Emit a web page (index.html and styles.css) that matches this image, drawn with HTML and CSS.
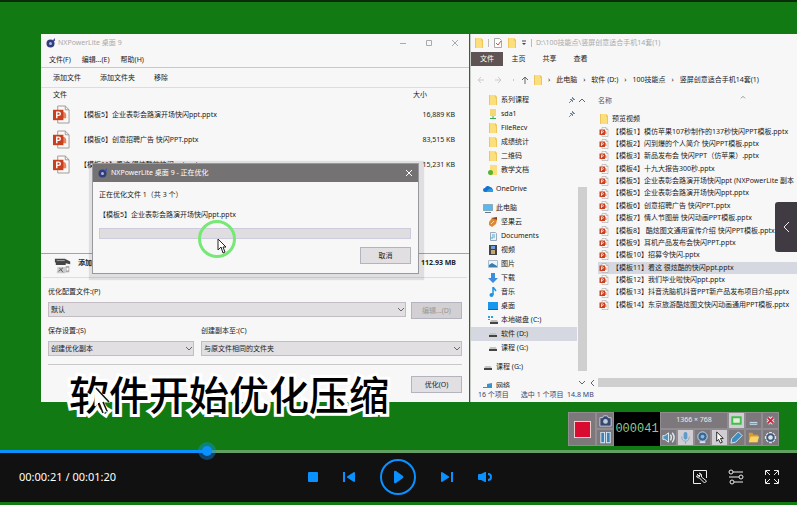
FILE: index.html
```html
<!DOCTYPE html>
<html>
<head>
<meta charset="utf-8">
<title>视频播放</title>
<link rel="stylesheet" href="styles.css">
</head>
<body>
<svg class="sprite" aria-hidden="true">
  <symbol id="ppt" viewBox="0 0 18 20">
    <path d="M5 1h8l4 4v14H5z" fill="#fbf7f5" stroke="#999" stroke-width="1"/>
    <path d="M13 1v4h4" fill="none" stroke="#999"/>
    <path d="M10 7a4 4 0 0 1 4 4v3h-4z" fill="#e9835f"/>
    <rect x="0" y="5" width="11" height="11" fill="#c8401f"/>
    <path d="M4 14V7.500h2a1.700 1.700 0 0 1 0 3.400h-2" fill="none" stroke="#fff" stroke-width="1.500"/>
  </symbol>
  <symbol id="folder" viewBox="0 0 10 10">
    <path d="M1 0h6l2 2v8H1z" fill="#fbdf7c"/><path d="M1 0h1v10H1zM7 0l2 2v8H8V3H7z" fill="#eec75c"/>
  </symbol>
  <symbol id="chev" viewBox="0 0 8 6"><path d="M1 1l3 3 3-3" fill="none" stroke="#666"/></symbol>
  <symbol id="pin" viewBox="0 0 6 6"><path d="M0 6l2-2M1 2l3 3M2 3l2-2M3 0l3 3M3 4l2-2" stroke="#75879a" fill="none"/></symbol>
  <symbol id="disk" viewBox="0 0 10 10"><path d="M2 4h6l1 3H1z" fill="#c4c4c4"/><path d="M1 6h8v2H1z" fill="#444"/></symbol>
  <symbol id="cursor" viewBox="0 0 10 16"><path d="M1 1v11l3-3 2 6 2-1-2-5h3z" fill="#fff" stroke="#222"/></symbol>
  <symbol id="app" viewBox="0 0 10 10"><circle cx="4.500" cy="5.500" r="4" fill="#333d78"/><circle cx="4.500" cy="5.500" r="1.500" fill="#aab5e8"/><path d="M6 3l3-3v3z" fill="#4656a8"/></symbol>
  <symbol id="close" viewBox="0 0 8 8"><path d="M1 1l6 6M7 1L1 7" stroke="currentColor" fill="none"/></symbol>
</svg>

<main class="desktop">
  <section class="window optimizer" aria-label="NXPowerLite">
    <header class="title">
      <svg class="i10"><use href="#app"/></svg><span>NXPowerLite 桌面 9</span>
      <span class="winbuttons">
        <button aria-label="最小化"><svg class="i8" viewBox="0 0 8 8"><path d="M1 4.500h6" stroke="currentColor"/></svg></button>
        <button aria-label="最大化"><svg class="i8" viewBox="0 0 8 8"><path d="M1.500 1.500h5v5h-5z" fill="none" stroke="currentColor"/></svg></button>
        <button aria-label="关闭"><svg class="i8"><use href="#close"/></svg></button>
      </span>
    </header>
    <nav class="menu"><button>文件(F)</button><button>编辑...(E)</button><button>帮助(H)</button></nav>
    <nav class="tools"><button>添加文件</button><button>添加文件夹</button><button>移除</button></nav>
    <div class="filelist">
      <table>
        <thead><tr><th colspan="2">文件</th><th class="size">大小</th></tr></thead>
        <tbody>
          <tr><td class="pic"><svg class="ppt-big"><use href="#ppt"/></svg></td><td>【模板5】企业表彰会路演开场快闪ppt.pptx</td><td class="size">16,889 KB</td></tr>
          <tr><td class="pic"><svg class="ppt-big"><use href="#ppt"/></svg></td><td>【模板6】创意招聘广告 快闪PPT.pptx</td><td class="size">83,515 KB</td></tr>
          <tr><td class="pic"><svg class="ppt-big"><use href="#ppt"/></svg></td><td>【模板11】看这 很炫酷的快闪ppt.pptx</td><td class="size">15,231 KB</td></tr>
        </tbody>
      </table>
    </div>
    <div class="total">
      <svg class="camera" viewBox="0 0 18 20"><path d="M0 2h11l6 3v3l-5-1v2H1V6H0z" fill="#454545"/><path d="M2 4h9" stroke="#aaa"/><path d="M3 11h9v7H2z" fill="#ccc"/><path d="M4 16l5-4M5 12l4 5" stroke="#555"/><path d="M12 10h4v7h-4z" fill="#aaa"/><path d="M13 12h2v3h-2z" fill="#fff"/></svg>
      <b>添加</b><b class="sum">112.93 MB</b>
    </div>
    <form class="settings">
      <label for="profile">优化配置文件:(P)</label>
      <div class="line">
        <div class="pick grow"><select id="profile"><option>默认</option></select><svg><use href="#chev"/></svg></div>
        <button type="button" class="btn" disabled>编辑...(D)</button>
      </div>
      <div class="line pair">
        <div class="save"><label for="save">保存设置:(S)</label><div class="pick"><select id="save"><option>创建优化副本</option></select><svg><use href="#chev"/></svg></div></div>
        <div class="grow"><label for="dest">创建副本至:(C)</label><div class="pick"><select id="dest"><option>与原文件相同的文件夹</option></select><svg><use href="#chev"/></svg></div></div>
      </div>
      <div class="actions"><button type="button" class="btn">优化(O)</button></div>
    </form>
  </section>

  <section class="window explorer" aria-label="文件资源管理器">
    <header class="title">
      <svg class="i10"><use href="#folder"/></svg><i class="sep"></i>
      <svg class="i10" viewBox="0 0 10 10"><path d="M1.500.5h5l2 2v7h-7z" fill="#fff" stroke="#aaa"/><path d="M3 5l2 2 3-4" fill="none" stroke="#c8523c"/></svg>
      <svg class="i10"><use href="#folder"/></svg>
      <svg class="i6" viewBox="0 0 6 6"><path d="M1 1h4" stroke="#444"/><path d="M1 3h4L3 5z" fill="#444"/></svg><i class="sep"></i>
      <span>D:\100技能点\竖屏创意适合手机14套(1)</span>
    </header>
    <nav class="tabs"><button class="active">文件</button><button>主页</button><button>共享</button><button>查看</button></nav>
    <nav class="address">
      <svg class="arrows" viewBox="0 0 54 10"><path d="M7 5H1m3-3L1 5l3 3M18 5h6m-3-3l3 3-3 3" fill="none" stroke="#ccc"/><path d="M36 5h1" stroke="#999"/><path d="M48 9V2m-3 3l3-3 3 3" fill="none" stroke="#666"/></svg>
      <svg class="i10 home"><use href="#folder"/></svg>
      <ol><li>此电脑</li><li>软件 (D:)</li><li>100技能点</li><li>竖屏创意适合手机14套(1)</li></ol>
    </nav>
    <div class="panes">
      <div class="side">
        <ul>
          <li class="in"><svg class="i10"><use href="#folder"/></svg>系列课程<svg class="pin"><use href="#pin"/></svg></li>
          <li class="in"><svg class="i10" viewBox="0 0 10 10"><path d="M2 0h6v7H2z" fill="#f5d873"/><path d="M5 7v2M2 9.500h6" stroke="#36ac55"/></svg>sda1<svg class="pin"><use href="#pin"/></svg></li>
          <li class="in"><svg class="i10"><use href="#folder"/></svg>FileRecv</li>
          <li class="in"><svg class="i10"><use href="#folder"/></svg>成绩统计</li>
          <li class="in"><svg class="i10"><use href="#folder"/></svg>二维码</li>
          <li class="in"><svg class="i10" viewBox="0 0 10 10"><path d="M2 0h7v10H2z" fill="#fbdf7c"/><circle cx="2.500" cy="7.500" r="2.500" fill="#55b52c"/></svg>教学文档</li>
        </ul>
        <ul>
          <li><svg class="i10" viewBox="0 0 10 10"><path d="M2 8a2 2 0 0 1 0-4 3 3 0 0 1 5-1 3 3 0 0 1 2 5z" fill="#1473cc"/><path d="M3 8l3-3a3 3 0 0 1 4 1v2z" fill="#2a9de8"/></svg>OneDrive</li>
        </ul>
        <ul>
          <li><svg class="i10" viewBox="0 0 10 10"><path d="M.5 1.500h9v6h-9z" fill="#5ab8f0" stroke="#8ab"/><path d="M2 9.500h6" stroke="#678"/></svg>此电脑</li>
          <li class="in"><svg class="i10" viewBox="0 0 10 10"><path d="M1 5l3-4 5 2-1 4-4 3-3-2z" fill="#dc8a35"/><path d="M3 1l6-1v3z" fill="#8c3c1e"/><path d="M3 7l3-3" stroke="#ffe09a"/></svg>坚果云</li>
          <li class="in"><svg class="i10" viewBox="0 0 10 10"><path d="M2.500 1.500h5l1 1v7h-6z" fill="#e7f2fa" stroke="#9ab"/><path d="M4 4h3M4 6h3M2 7h3" stroke="#58a9cc"/></svg>Documents</li>
          <li class="in"><svg class="i10" viewBox="0 0 10 10"><path d="M1 0h8v10H1z" fill="#444"/><path d="M3 1h4v3H3z" fill="#6a9edc"/><path d="M3 5h4v4H3z" fill="#c9a86c"/></svg>视频</li>
          <li class="in"><svg class="i10" viewBox="0 0 10 10"><path d="M.5 1.500h9v7h-9z" fill="#e9f4fb" stroke="#abc"/><path d="M1 6l3-2 5 3v1H1z" fill="#387dad"/></svg>图片</li>
          <li class="in"><svg class="i10" viewBox="0 0 10 10"><path d="M3 0h4v5h3l-5 5-5-5h3z" fill="#3e8ddd"/></svg>下载</li>
          <li class="in"><svg class="i10" viewBox="0 0 10 10"><path d="M5 8V0l3 4" fill="none" stroke="#1c94e0" stroke-width="1.500"/><circle cx="3.500" cy="8" r="2" fill="#1c94e0"/></svg>音乐</li>
          <li class="in"><svg class="i10" viewBox="0 0 10 10"><path d="M0 1h10v8H0z" fill="#1696ec"/><path d="M0 8h10v1H0z" fill="#0d67b0"/></svg>桌面</li>
          <li class="in"><svg class="i10" viewBox="0 0 10 10"><path d="M0 1h2v2H0zM3 1h2v2H3zM0 4h2v1H0z" fill="#23a6e0"/><path d="M3 5h6l1 2H2z" fill="#bbb"/><path d="M2 7h8v2H2z" fill="#444"/></svg>本地磁盘 (C:)</li>
          <li class="in current"><svg class="i10"><use href="#disk"/></svg>软件 (D:)</li>
          <li class="in"><svg class="i10"><use href="#disk"/></svg>课程 (G:)</li>
        </ul>
        <ul><li><svg class="i10"><use href="#disk"/></svg>课程 (G:)</li></ul>
        <ul><li><svg class="i10" viewBox="0 0 10 10"><path d="M0 6h5v3H0zM4 3l5-1v7H4z" fill="#3a94cc"/></svg>网络</li></ul>
      </div>
      <div class="vscroll"><svg><use href="#chev"/></svg><i></i><svg><use href="#chev"/></svg></div>
      <div class="files">
        <table>
          <thead><tr><th>名称<svg class="sort"><use href="#chev"/></svg></th></tr></thead>
          <tbody>
            <tr><td><svg class="i10"><use href="#folder"/></svg>预览视频</td></tr>
            <tr><td><svg class="i10"><use href="#ppt"/></svg>【模板1】模仿苹果107秒制作的137秒快闪PPT模板.pptx</td></tr>
            <tr><td><svg class="i10"><use href="#ppt"/></svg>【模板2】闪到爆的个人简介 快闪PPT模板.pptx</td></tr>
            <tr><td><svg class="i10"><use href="#ppt"/></svg>【模板3】新品发布会 快闪PPT（仿苹果）.pptx</td></tr>
            <tr><td><svg class="i10"><use href="#ppt"/></svg>【模板4】十九大报告300秒.pptx</td></tr>
            <tr><td><svg class="i10"><use href="#ppt"/></svg>【模板5】企业表彰会路演开场快闪ppt (NXPowerLite 副本</td></tr>
            <tr><td><svg class="i10"><use href="#ppt"/></svg>【模板5】企业表彰会路演开场快闪ppt.pptx</td></tr>
            <tr><td><svg class="i10"><use href="#ppt"/></svg>【模板6】创意招聘广告 快闪PPT.pptx</td></tr>
            <tr><td><svg class="i10"><use href="#ppt"/></svg>【模板7】情人节图册 快闪动画PPT模板.pptx</td></tr>
            <tr><td><svg class="i10"><use href="#ppt"/></svg>【模板8】 酷炫图文通用宣传介绍 快闪PPT模板.pptx</td></tr>
            <tr><td><svg class="i10"><use href="#ppt"/></svg>【模板9】耳机产品发布会快闪PPT.pptx</td></tr>
            <tr><td><svg class="i10"><use href="#ppt"/></svg>【模板10】招募令快闪.pptx</td></tr>
            <tr class="current"><td><svg class="i10"><use href="#ppt"/></svg>【模板11】看这 很炫酷的快闪ppt.pptx</td></tr>
            <tr><td><svg class="i10"><use href="#ppt"/></svg>【模板12】我们毕业啦快闪ppt.pptx</td></tr>
            <tr><td><svg class="i10"><use href="#ppt"/></svg>【模板13】抖音洗脑机抖音PPT新产品发布项目介绍.pptx</td></tr>
            <tr><td><svg class="i10"><use href="#ppt"/></svg>【模板14】东京旅游酷炫图文快闪动画通用PPT模板.pptx</td></tr>
          </tbody>
        </table>
        <div class="hscroll"><svg><use href="#chev"/></svg><i></i></div>
      </div>
    </div>
    <footer class="status"><span>16 个项目</span><span>选中 1 个项目&nbsp; 14.8 MB</span></footer>
  </section>

  <section class="dialog" role="dialog" aria-label="正在优化">
    <header><svg class="i10"><use href="#app"/></svg><span>NXPowerLite 桌面 9 - 正在优化</span><button aria-label="关闭"><svg class="i8"><use href="#close"/></svg></button></header>
    <div class="body">
      <p>正在优化文件 1（共 3 个）</p>
      <p>【模板5】企业表彰会路演开场快闪ppt.pptx</p>
      <progress value="0" max="100" aria-label="进度"></progress>
      <div class="actions"><button class="btn">取消</button></div>
    </div>
  </section>
  <div class="ring"><svg><use href="#cursor"/></svg></div>

  <p class="caption">软件开始优化压缩</p>
  <svg class="pointer" viewBox="0 0 16 28"><path d="M1 1v18l4-4 4 11 4-2-4-9h7z" fill="#fff" stroke="#fff"/><path d="M2 1l13 14M5 16l4 10M9 15l4 9" stroke="#111" stroke-width="1.500" fill="none"/></svg>

  <section class="recorder" aria-label="录屏">
    <button class="rec" aria-label="录制"><i></i></button>
    <button aria-label="截图"><svg viewBox="0 0 16 16"><path d="M2 5h3l1-2h4l1 2h3v9H2z" fill="#37476e" stroke="#ccd"/><circle cx="8" cy="9" r="2.500" fill="#bcd"/></svg></button>
    <output>000041</output>
    <span class="res">1366 × 768</span>
    <button class="lit" aria-label="区域"><svg viewBox="0 0 16 16"><path d="M3.500 4.500h9v7h-9z" fill="#dfeedd" stroke="#43bd4b" stroke-width="2"/></svg></button>
    <button aria-label="最小化"><svg viewBox="0 0 16 16"><path d="M4 11h8" stroke="#d4e8f8" stroke-width="3"/><path d="M4 11h8" stroke="#4a8cc0"/></svg></button>
    <button aria-label="关闭"><svg viewBox="0 0 16 16"><path d="M5 5l6 6M11 5l-6 6" stroke="#f3dfe2" stroke-width="4"/><path d="M5 5l6 6M11 5l-6 6" stroke="#d02440" stroke-width="2"/></svg></button>
    <button aria-label="暂停"><svg viewBox="0 0 16 16"><path d="M5 2v12M11 2v12" stroke="#dcebf5" stroke-width="5"/><path d="M5 3v10M11 3v10" stroke="#3e83b8" stroke-width="3"/></svg></button>
    <button aria-label="声音"><svg viewBox="0 0 16 16"><path d="M2 6h2l4-3v10L4 10H2z" fill="#4c94bd" stroke="#e3eff5"/><path d="M10 5q2 3 0 6M12 3q4 5 0 10" fill="none" stroke="#dcebf5" stroke-width="1.500"/></svg></button>
    <button class="lit" aria-label="麦克风"><svg viewBox="0 0 16 16"><rect x="6" y="2" width="4" height="8" rx="2" fill="#5e9bc8"/><path d="M4 7q0 5 4 5t4-5M8 12v3" fill="none" stroke="#7badcd"/></svg></button>
    <button aria-label="摄像头"><svg viewBox="0 0 16 16"><circle cx="8" cy="7" r="5" fill="#3c6890" stroke="#cde"/><circle cx="8" cy="7" r="2" fill="#84b8df"/><path d="M5 13h6" stroke="#dde" stroke-width="2"/></svg></button>
    <button class="lit" aria-label="光标"><svg viewBox="0 0 16 16"><path d="M5 2v10l2-2 2 4 2-1-2-4h3z" fill="#fff" stroke="#222"/></svg></button>
    <button aria-label="画笔"><svg viewBox="0 0 16 16"><path d="M2 14l1-5 7-7 4 4-7 7z" fill="#3e8dbf" stroke="#d8ebf5"/></svg></button>
    <button aria-label="文件夹"><svg viewBox="0 0 16 16"><path d="M3 3h4l1 2h5v8H3z" fill="#d99a28"/><path d="M5 7h9l-2 6H3z" fill="#fbd467"/></svg></button>
    <button aria-label="设置"><svg viewBox="0 0 16 16"><path d="M8 2v12M2 8h12M4 4l8 8M12 4l-8 8" stroke="#dde6ee" stroke-width="3"/><circle cx="8" cy="8" r="3.500" fill="#dde6ee" stroke="#3e5a78" stroke-width="2"/></svg></button>
  </section>

  <button class="drawer" aria-label="展开列表"><svg viewBox="0 0 8 12"><path d="M7 1L2 6l5 5" fill="none" stroke="#eee"/></svg></button>
</main>

<footer class="player">
  <input class="seek" type="range" min="0" max="80" step="0.5" value="20.5" aria-label="播放进度">
  <div class="controls">
    <time>00:00:21 / 00:01:20</time>
    <div class="main">
      <button aria-label="停止"><svg viewBox="0 0 16 16"><rect x="3" y="3" width="10" height="10" rx="1"/></svg></button>
      <button aria-label="上一个"><svg viewBox="0 0 16 16"><path d="M2 3h2v10H2zM13 3q1 0 1 1v8q0 1-1 1L6 8.500v-1z"/></svg></button>
      <button class="play" aria-label="播放"><svg viewBox="0 0 36 36"><circle cx="18" cy="18" r="17" fill="none" stroke="#0a91ff" stroke-width="2"/><path d="M14 13q0-2 2-1l7 5q1 1 0 2l-7 5q-2 1-2-1z"/></svg></button>
      <button aria-label="下一个"><svg viewBox="0 0 16 16"><path d="M12 3h2v10h-2zM3 3q-1 0-1 1v8q0 1 1 1l7-4.500v-1z"/></svg></button>
      <button class="vol" aria-label="音量"><svg viewBox="0 0 16 16"><path d="M1 6q0-1 1-1h2l4-2h1v10H8l-4-2H2q-1 0-1-1z"/><path d="M11 5q3 0 3 3t-3 3" fill="none" stroke="#0a91ff" stroke-width="2"/></svg></button>
    </div>
    <div class="extra">
      <button aria-label="工具"><svg viewBox="0 0 16 16"><path d="M14.500 9V1.500h-13v13H9M5 5l3 3M4.500 7q0 2 3 2l5 5 2-2-5-4q1-3-2-4l1 2-2 1z"/></svg></button>
      <button aria-label="调节"><svg viewBox="0 0 16 16"><circle cx="3" cy="3" r="2"/><circle cx="13" cy="8" r="2"/><circle cx="4" cy="13" r="2"/><path d="M5 3h10M1 8h10M6 13h9"/></svg></button>
      <button aria-label="全屏"><svg viewBox="0 0 16 16"><path d="M1.500 6V1.500H6M10 1.500h4.500V6M14.500 10v4.500H10M6 14.500H1.500V10M2 2l4 4M14 2l-4 4M14 14l-4-4M2 14l4-4"/></svg></button>
    </div>
  </div>
</footer>
</body>
</html>
```
FILE: styles.css
```css
* { box-sizing: border-box; }
body {
  margin: 0;
  min-height: 100vh;
  display: flex;
  flex-direction: column;
  background: #127a12;
  border-top: 2px solid #0b2c0b;
  font: 7px/14px "Noto Sans", "Noto Sans CJK SC", sans-serif;
  color: #222;
  overflow: hidden;
}
button, select { font: inherit; color: inherit; border: 0; background: none; padding: 0; }
button { display: inline-flex; align-items: center; justify-content: center; }
svg { display: block; flex: none; }
p, ul, ol { margin: 0; padding: 0; list-style: none; }
table { border-collapse: collapse; width: 100%; }
th, td { padding: 0; text-align: left; font-weight: 400; white-space: nowrap; }
.sprite { position: absolute; width: 0; height: 0; }
.i10 { width: 10px; height: 10px; }
.i8 { width: 8px; height: 8px; }
.i6 { width: 6px; height: 6px; }
.grow { flex: 1; }

.desktop { flex: 1; position: relative; overflow: hidden; }
.window { position: absolute; top: 32px; background: #f7f7f7; display: flex; flex-direction: column; }
.title { display: flex; align-items: center; gap: 2px; height: 18px; color: #aaa; }

.optimizer { left: 41px; width: 428px; height: 368px; }
.optimizer .title { padding: 0 10px 0 5px; }
.winbuttons { margin-left: auto; display: flex; gap: 18px; }
.menu { display: flex; gap: 11px; height: 16px; padding-left: 8px; border-bottom: 1px solid #c9c9c9; }
.tools { display: flex; gap: 19px; height: 20px; padding-left: 12px; border-bottom: 1px solid #d3e0e8; }
.filelist { height: 166px; border-bottom: 1px solid #a3a3b0; padding: 0 14px 0 12px; }
.filelist thead tr { height: 14px; }
.filelist tbody tr { height: 25px; }
.filelist .pic { width: 27px; }
.filelist .size { text-align: right; }
.filelist th.size { padding-right: 28px; }
.ppt-big { width: 17px; height: 19px; }
.total { display: flex; align-items: center; height: 24px; margin: 0 2px; padding: 0 11px 6px; gap: 6px; border-bottom: 1px solid #d3e0e8; }
.camera { width: 18px; height: 18px; margin-top: 6px; }
.total .sum { margin-left: auto; }
.settings { padding: 7px 7px 0; display: flex; flex-direction: column; }
.settings label { display: block; height: 17px; }
.line { display: flex; gap: 5px; align-items: flex-start; }
.pair { gap: 7px; margin-top: 5px; padding-bottom: 8px; border-bottom: 1px solid #c8c8c8; }
.save { width: 146px; }
.pick { position: relative; display: flex; }
.pick select { appearance: none; flex: 1; height: 15px; padding: 0 2px; border: 1px solid #c3bdc3; background: #e1dfe2; }
.pick svg { position: absolute; right: 1px; top: 5px; width: 8px; height: 6px; }
.btn { width: 51px; height: 17px; border: 1px solid #b4b4bf; background: #e1dfe2; }
.btn:disabled { color: #999; background: #d2d0d2; }
.actions { display: flex; justify-content: flex-end; }
.settings .actions { padding-top: 11px; }

.explorer { left: 470px; right: 0; height: 368px; border-left: 1px solid #c4ccc4; }
.explorer .title { padding-left: 3px; gap: 4px; }
.explorer .title .sep { width: 1px; height: 8px; background: #bbb; }
.tabs { display: flex; height: 15px; }
.tabs button { width: 31px; height: 14px; }
.tabs .active { width: 32px; background: #5f5353; color: #fff; }
.address { display: flex; align-items: center; height: 26px; }
.arrows { width: 54px; height: 10px; margin-left: 6px; }
.home { margin: 0 2px; }
.address ol { display: flex; }
.address li::before { content: "›"; margin: 0 6px; }
.address li:first-child::before { margin-left: 3px; }
.panes { flex: 1; display: flex; min-height: 0; }
.side { width: 106px; overflow: hidden; }
.side ul { margin-bottom: 5px; }
.side li { display: flex; align-items: center; gap: 3px; height: 14px; padding-left: 12px; }
.side li.in { padding-left: 17px; }
.side ul:last-child { margin: 0; }
.side .current, .files .current { background: #d5d8e0; }
.pin { width: 6px; height: 6px; margin: 0 2px 0 auto; }
.vscroll { width: 10px; display: flex; flex-direction: column; align-items: center; }
.vscroll svg, .hscroll svg { width: 8px; height: 6px; }
.vscroll svg:first-child { transform: rotate(180deg); margin: 4px 0 84px; }
.vscroll i { width: 9px; flex: 1; background: #cfcfcf; margin-bottom: 9px; }
.vscroll svg:last-child { margin-bottom: 2px; }
.files { flex: 1; min-width: 0; overflow: hidden; display: flex; flex-direction: column; padding-left: 1px; }
.files table { height: 216px; margin-top: 2px; margin-left: 10px; }
.files thead tr { height: 18px; }
.files th { color: #557; position: relative; vertical-align: top; }
.files th, .files td { line-height: 12px; }
.files td .i10 { display: inline-block; vertical-align: middle; margin: 0 3px 0 1px; }
.sort { position: absolute; left: 141px; top: 0; width: 8px; height: 4px; transform: rotate(180deg); }
.hscroll { margin-top: auto; height: 9px; display: flex; align-items: center; gap: 2px; margin-bottom: 1px; }
.hscroll svg { transform: rotate(90deg); }
.hscroll i { flex: 1; height: 9px; background: #cfcfcf; }
.status { display: flex; gap: 12px; height: 14px; padding-left: 7px; color: #446; }

.dialog { position: absolute; left: 92px; top: 161px; width: 327px; background: #f7f7f7; border: 1px solid #98989f; box-shadow: 1px 2px 1px 4px #00001418; }
.dialog header { display: flex; align-items: center; gap: 3px; height: 18px; padding: 0 5px; background: #757273; color: #fff; }
.dialog header button { margin-left: auto; }
.dialog .body { padding: 6px 7px 6px 6px; }
.dialog p { height: 20px; }
.dialog progress { appearance: none; display: block; width: 100%; height: 11px; border: 1px solid #ccd; background: #dfdde0; }
.dialog progress::-webkit-progress-bar { background: #dfdde0; }
.dialog .actions { padding: 8px 0 3px; }
.ring { position: absolute; left: 198px; top: 218px; width: 38px; height: 38px; border: 3px solid #76e876; border-radius: 50%; }
.ring svg { width: 10px; height: 16px; margin: 15px 0 0 16px; }

.caption { position: absolute; left: 69px; top: 364px; font-family: "Noto Sans CJK SC", sans-serif; font-size: 40px; line-height: 54px; font-weight: 500; color: #000; white-space: nowrap; -webkit-text-stroke: 6px #fff; paint-order: stroke fill; }
.pointer { position: absolute; left: 94px; top: 385px; width: 16px; height: 28px; }

.recorder { position: absolute; right: 18px; top: 410px; display: grid; grid-template: 17px 17px / 28px 18px 46px repeat(7, 17px); }
.recorder > * { border: 1px solid #918c91; background: #7c787c; }
.recorder svg { width: 15px; height: 15px; }
.recorder .rec, .recorder output { grid-row: span 2; }
.rec i { width: 17px; height: 17px; background: #d80b30; border: 1px solid #ecc; }
.recorder output { background: #000; border: 0; color: #8fca90; font: 12px/34px "Liberation Mono", monospace; text-align: center; }
.recorder .res { grid-column: span 4; color: #eee; text-align: center; font-size: 7px; }
.recorder .lit { background: #d0ced2; }
.drawer { position: absolute; right: 0; top: 200px; width: 22px; height: 50px; background: #403b42; border-radius: 3px 0 0 3px; }
.drawer svg { width: 8px; height: 12px; }

.player { position: relative; background: #111; margin-bottom: 3px; }
.seek { position: absolute; left: 0; top: -8px; width: 100%; height: 14px; margin: 0; appearance: none; background: none; }
.seek::-webkit-slider-runnable-track { height: 3px; background: linear-gradient(90deg, #0a91ff 26%, #62a062 26%); }
.seek::-webkit-slider-thumb { appearance: none; width: 10px; height: 10px; margin-top: -4px; border-radius: 50%; background: #0a91ff; box-shadow: 0 0 0 4px #0a91ff66; }
.controls { display: grid; grid-template-columns: 1fr auto 1fr; align-items: center; height: 50px; padding: 0 17px 0 19px; }
.controls time { color: #fff; font-size: 11px; line-height: 16px; }
.controls svg { width: 16px; height: 16px; }
.main { display: flex; align-items: center; }
.main button { width: 36px; height: 36px; }
.main svg { fill: #0a91ff; }
.main .play { width: 62px; }
.main .play svg { width: 36px; height: 36px; }
.main .vol { width: 40px; }
.extra { display: flex; justify-content: flex-end; gap: 20px; }
.extra svg { fill: none; stroke: #eee; }
```
